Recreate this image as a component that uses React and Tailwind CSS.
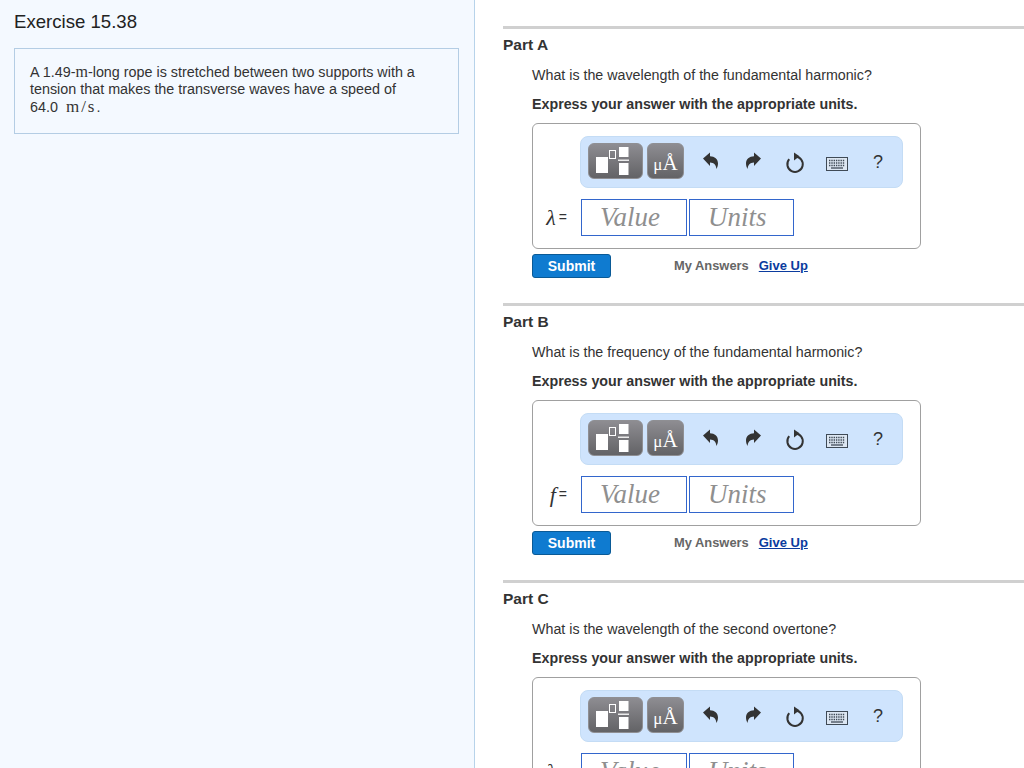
const sans = "font-['Liberation_Sans',Arial,sans-serif]";
const serif = "font-['Liberation_Serif','Times_New_Roman',serif]";

function TemplatesIcon() {
  return (
    <svg width="53" height="34" viewBox="0 0 53 34" aria-hidden="true">
      <rect x="7" y="13" width="12" height="16" fill="#fff" />
      <rect x="20.5" y="6.5" width="6" height="8" fill="none" stroke="#fff" strokeWidth="1" />
      <rect x="30" y="3" width="9.500" height="10" fill="#fff" />
      <rect x="29" y="15.500" width="11" height="1.500" fill="#fff" opacity="0.85" />
      <rect x="30" y="19" width="9.500" height="12" fill="#fff" />
    </svg>
  );
}

function UndoIcon() {
  return (
    <svg width="18" height="20" viewBox="0 0 18 20" aria-hidden="true">
      <path d="M1 7.500 8 1.500v3.700c4.600.2 8 2.700 8 7.300 0 2.200-.7 4-1.600 5.500-.3-3.900-2.300-6.300-6.400-6.500v3.500z" fill="#333" />
    </svg>
  );
}

function RedoIcon() {
  return (
    <svg width="18" height="20" viewBox="0 0 18 20" aria-hidden="true">
      <path d="M17 7.500 10 1.500v3.700c-4.600.2-8 2.700-8 7.300 0 2.200.7 4 1.600 5.500.3-3.900 2.300-6.300 6.400-6.500v3.500z" fill="#333" />
    </svg>
  );
}

function ResetIcon() {
  return (
    <svg width="20" height="22" viewBox="0 0 20 22" aria-hidden="true">
      <path d="M4.200 7.200a7.700 7.700 0 1 0 5.800-2.700" fill="none" stroke="#333" strokeWidth="2" />
      <path d="M9 0.500v8l5.500-4.300z" fill="#333" />
    </svg>
  );
}

function KeyboardIcon() {
  return (
    <svg width="22" height="14" viewBox="0 0 22 14" aria-hidden="true">
      <rect x="0.500" y="0.500" width="21" height="13" fill="#dce6f2" stroke="#3f4a56" />
      <path d="M3 3.500h16M3 6h16M3 8.500h16" stroke="#3f4a56" strokeWidth="1.400" strokeDasharray="1.400 .9" />
      <path d="M5 11h12" stroke="#3f4a56" strokeWidth="1.300" />
    </svg>
  );
}

function Toolbar() {
  return (
    <div className="ml-[47px] flex h-[52px] w-[323px] items-center rounded-lg border border-[#c4dcf5] bg-[#cfe4fd] pb-[2px] pl-[7px]">
      <div className="flex h-[36px] w-[55px] items-center justify-center rounded-md border border-[#8f8f93] bg-gradient-to-b from-[#8e8d92] to-[#636366]">
        <TemplatesIcon />
      </div>
      <div className={`${serif} ml-[4px] flex h-[36px] w-[37px] items-baseline justify-center rounded-md border border-[#8f8f93] bg-gradient-to-b from-[#8e8d92] to-[#636366] pt-[9px] leading-none text-white`}>
        <span className="text-[17px]">μ</span>
        <span className="text-[21px]">Å</span>
      </div>
      <span className="ml-[18px] flex w-[18px] justify-center"><UndoIcon /></span>
      <span className="ml-[24px] flex w-[18px] justify-center"><RedoIcon /></span>
      <span className="ml-[23px] flex w-[20px] justify-center pt-[3px]"><ResetIcon /></span>
      <span className="ml-[21px] flex w-[22px] justify-center pt-[5px]"><KeyboardIcon /></span>
      <span className={`${sans} ml-[25px] pt-[2px] text-[18px] leading-none text-[#333]`}>?</span>
    </div>
  );
}

function AnswerInput({ className, placeholder }) {
  return (
    <div className={`${serif} ${className} flex h-[37px] items-center border border-[#3366cc] bg-white pl-[18px] text-[27px] italic leading-none text-[#8f8f8f]`}>
      {placeholder}
    </div>
  );
}

function Part({ name, question, symbol }) {
  return (
    <section className="h-[277px] border-t-[3px] border-[#d0d0d0]">
      <h2 className="mt-[7px] text-[15.500px] font-bold leading-[17px] text-[#333]">{name}</h2>
      <p className="ml-[29px] mt-[14px] text-[14.250px] leading-[17px] text-[#333]">{question}</p>
      <p className="ml-[29px] mt-[12px] text-[14.250px] font-bold leading-[17px] text-[#333]">
        Express your answer with the appropriate units.
      </p>
      <div className="ml-[29px] mt-[10px] h-[126px] w-[389px] rounded-md border border-[#a0a0a0] bg-white pt-[12px]">
        <Toolbar />
        <div className="mt-[11px] flex items-center">
          <div className="flex w-[48px] items-center justify-end pr-[14px] text-[14px] text-[#333]">
            <span className={`${serif} mr-[3px] text-[22px] italic leading-none`}>{symbol}</span>
            <span>=</span>
          </div>
          <AnswerInput className="w-[106px]" placeholder="Value" />
          <AnswerInput className="ml-[2px] w-[105px]" placeholder="Units" />
        </div>
      </div>
      <div className="ml-[29px] mt-[5px] flex items-center">
        <button className="h-[24px] w-[79px] rounded-[3px] border border-[#0a5a96] bg-[#0f7bd0] text-[14px] font-bold leading-none text-white">
          Submit
        </button>
        <span className="ml-[63px] text-[12.900px] font-bold text-[#666]">My Answers</span>
        <a href="#" className="ml-[10px] text-[13px] font-bold text-[#0b3b9e] underline">Give Up</a>
      </div>
    </section>
  );
}

export default function App() {
  return (
    <div className={`${sans} flex h-[768px] w-[1024px] overflow-hidden bg-white`}>
      <aside className="h-full w-[475px] shrink-0 border-r border-[#b7d3ea] bg-[#f4f9ff] pl-[14px]">
        <h1 className="pt-[11px] text-[18.600px] leading-[22px] text-[#222]">Exercise 15.38</h1>
        <div className="mt-[15px] h-[86px] w-[445px] border border-[#b4cde4] pl-[15px] pt-[14px] text-[14.350px] leading-[17px] text-[#333]">
          <p>
            A 1.49-<span className={`${serif} text-[16px]`}>m</span>-long rope is stretched between two supports with a
            <br />
            tension that makes the transverse waves have a speed of
            <br />
            64.0 <span className={`${serif} ml-[4px] text-[17px] tracking-[2px]`}>m/s</span>.
          </p>
        </div>
      </aside>
      <main className="min-w-0 flex-1 pl-[28px] pt-[26px]">
        <Part name="Part A" question="What is the wavelength of the fundamental harmonic?" symbol="λ" />
        <Part name="Part B" question="What is the frequency of the fundamental harmonic?" symbol="f" />
        <Part name="Part C" question="What is the wavelength of the second overtone?" symbol="λ" />
      </main>
    </div>
  );
}
